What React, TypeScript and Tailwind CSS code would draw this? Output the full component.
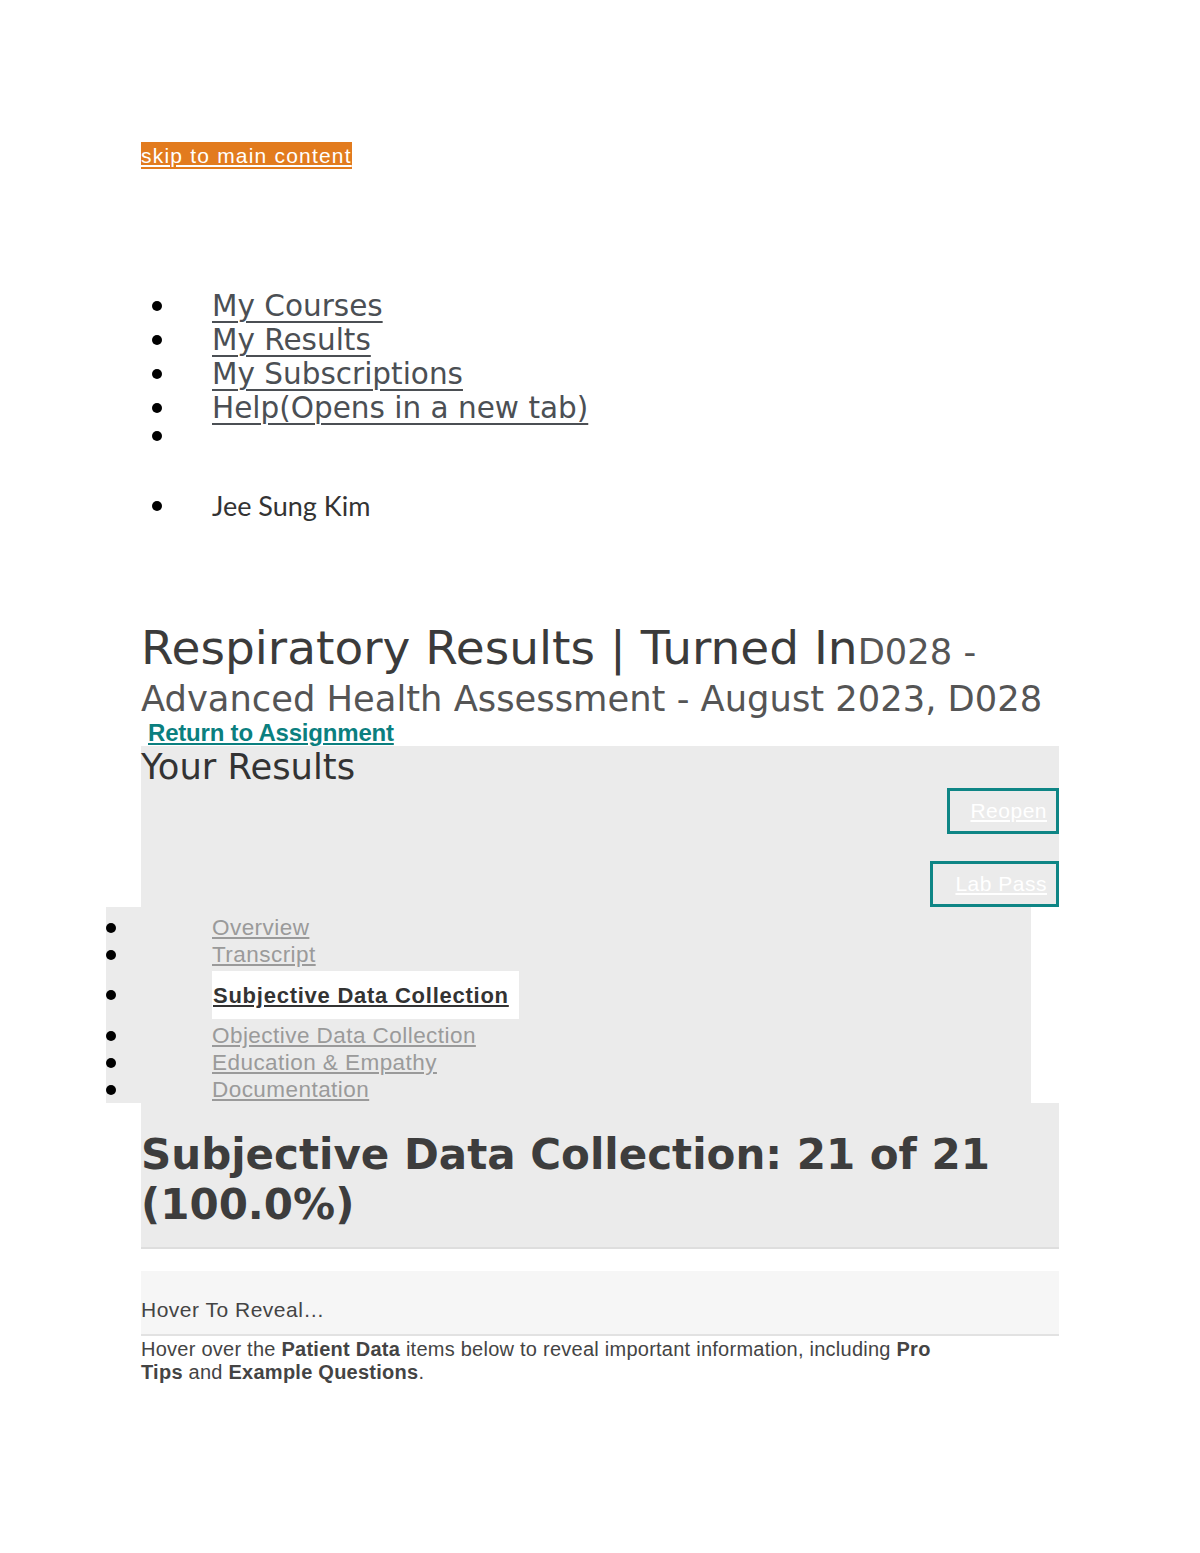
import React from 'react';

const navLinks = ['My Courses', 'My Results', 'My Subscriptions', 'Help(Opens in a new tab)'];

const tabs = [
  { label: 'Overview', active: false },
  { label: 'Transcript', active: false },
  { label: 'Subjective Data Collection', active: true },
  { label: 'Objective Data Collection', active: false },
  { label: 'Education & Empathy', active: false },
  { label: 'Documentation', active: false },
];

const Bullet = ({ className = '' }: { className?: string }) => (
  <span className={`inline-block w-[10px] h-[10px] rounded-full bg-black shrink-0 ${className}`} />
);

const App = () => {
  return (
    <div className="w-[1200px] min-h-[1553px] bg-white text-[#444] font-['DejaVu_Sans',sans-serif]">
      <div className="pt-[142px] pl-[141px]">
        <a
          href="#main"
          className="inline-block bg-[#e27b1e] text-white underline underline-offset-2 font-['Liberation_Sans',sans-serif] text-[21px] leading-[27px] tracking-[1.2px]"
        >
          skip to main content
        </a>
      </div>

      {/* top navigation */}
      <ul className="mt-[119px] pl-[152px]">
        {navLinks.map((l) => (
          <li key={l} className="flex items-center h-[34px]">
            <Bullet />
            <a href="#" className="ml-[50px] text-[29.5px] leading-[34px] text-[#4b4f54] underline underline-offset-[5px] decoration-[2px]">
              {l}
            </a>
          </li>
        ))}
        <li className="flex items-center h-[22px]">
          <Bullet />
        </li>
        <li className="flex items-center h-[34px] mt-[42px]">
          <Bullet />
          <span className="ml-[50px] text-[27px] font-['Lato',sans-serif] text-[#333]">Jee Sung Kim</span>
        </li>
      </ul>

      <div className="pl-[141px] w-[1059px]">
        <h1 className="mt-[101px] text-[#3b3b3b]">
          <span className="text-[47px] leading-[47px]">Respiratory Results | Turned In</span>
          <span className="text-[35.3px] leading-[47px] text-[#555]">D028 - Advanced Health Assessment - August 2023, D028</span>
        </h1>
        <a href="#" className="block ml-[7px] mt-[-2px] text-[24px] leading-[26px] font-bold text-[#0b7f7f] underline font-['Liberation_Sans',sans-serif] tracking-[-0.2px]">
          Return to Assignment
        </a>

        <div className="bg-[#ebebeb]">
          <div className="text-[35.3px] leading-[42px] text-[#333]">Your Results</div>
          <div className="flex flex-col items-end">
            <a href="#" className="border-[3px] border-[#0e8585] h-[46px] w-[112px] flex items-center justify-end pr-[9px] text-white underline text-[21px] tracking-[0.5px] font-['Liberation_Sans',sans-serif]">
              Reopen
            </a>
            <a href="#" className="mt-[27px] border-[3px] border-[#0e8585] h-[46px] w-[129px] flex items-center justify-end pr-[9px] text-white underline text-[21px] tracking-[0.5px] font-['Liberation_Sans',sans-serif]">
              Lab Pass
            </a>
          </div>
        </div>
      </div>

      {/* tab list */}
      <div className="flex">
        <ul className="ml-[106px] w-[925px] bg-[#ebebeb] pt-[7px] font-['Liberation_Sans',sans-serif]">
          {tabs.map((t) =>
            t.active ? (
              <li key={t.label} className="flex items-center h-[48px] my-[3px]">
                <Bullet />
                <a
                  href="#"
                  className="ml-[96px] h-[48px] w-[307px] bg-white flex items-center pl-[1px] text-[22px] font-bold text-[#333] underline tracking-[0.75px]"
                >
                  {t.label}
                </a>
              </li>
            ) : (
              <li key={t.label} className="flex items-center h-[27px]">
                <Bullet />
                <a href="#" className="ml-[96px] text-[22.5px] leading-[27px] text-[#9a9a9a] underline tracking-[0.45px]">
                  {t.label}
                </a>
              </li>
            )
          )}
        </ul>
      </div>

      <div className="pl-[141px] w-[1059px]">
        <div className="bg-[#ebebeb] border-b-[2px] border-[#dedede] pt-[27px] pb-[17px]">
          <h2 className="text-[42px] leading-[50px] font-bold text-[#3d3d3d]">
            Subjective Data Collection: 21 of 21 (100.0%)
          </h2>
        </div>

        <div className="mt-[22px] bg-[#f6f6f6] border-b-[2px] border-[#e2e2e2] h-[65px] flex items-end pb-[9px]">
          <span className="text-[21px] font-['Liberation_Sans',sans-serif] text-[#444] tracking-[0.5px]">Hover To Reveal…</span>
        </div>

        <p className="mt-[2px] w-[800px] text-[20px] leading-[23px] font-['Liberation_Sans',sans-serif] text-[#444] tracking-[0.25px]">
          Hover over the <b>Patient Data</b> items below to reveal important information, including <b>Pro Tips</b> and{' '}
          <b>Example Questions</b>.
        </p>
      </div>
    </div>
  );
};

export default App;
